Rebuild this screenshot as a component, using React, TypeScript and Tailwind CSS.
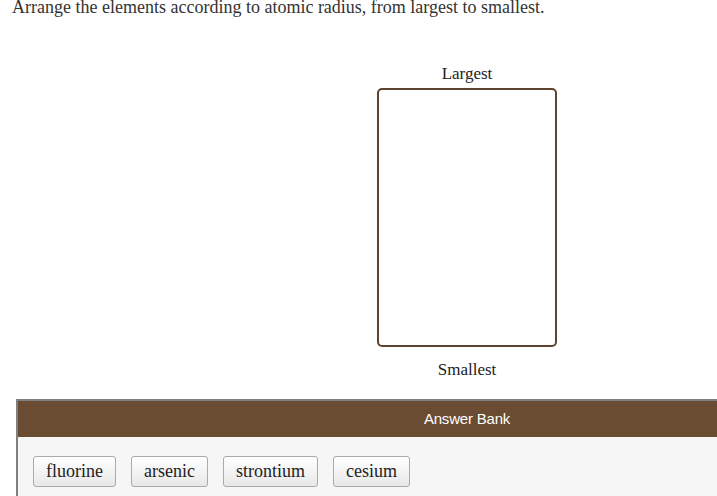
import React from 'react';

const bank = ['fluorine', 'arsenic', 'strontium', 'cesium'];

export default function App() {
  return (
    <div className="w-[717px] h-[496px] overflow-hidden bg-white font-['Liberation_Serif',serif] text-[#222]">
      <p className="pl-[12px] -mt-[3px] text-[18px] leading-[20px] text-[#333]">
        Arrange the elements according to atomic radius, from largest to smallest.
      </p>

      {/* ranking target */}
      <div className="ml-[377px] mt-[47px] w-[180px] flex flex-col items-center">
        <div className="text-[17px] leading-[20px] text-[#222]">Largest</div>
        <div className="mt-[4px] w-[180px] h-[259px] border-2 border-[#5c4430] rounded-[5px] bg-white" />
        <div className="mt-[13px] text-[17px] leading-[20px] text-[#222]">Smallest</div>
      </div>

      {/* answer bank */}
      <div className="ml-[16px] mt-[19px] w-[900px] border-l-2 border-t-2 border-[#808080]">
        <div className="h-[36px] bg-[#6a4c33] flex items-center justify-center text-white text-[15px] font-['Liberation_Sans',sans-serif] tracking-[-0.2px]">
          Answer Bank
        </div>
        <div className="bg-[#f6f6f6] h-[80px] flex gap-[15px] pl-[15px] pt-[19px]">
          {bank.map((item) => (
            <div
              key={item}
              className="h-[31px] px-[12px] flex items-center border border-[#aaa] rounded-[3px] bg-gradient-to-b from-white to-[#e8e8e8] text-[18px] text-[#222]"
            >
              {item}
            </div>
          ))}
        </div>
      </div>
    </div>
  );
}
